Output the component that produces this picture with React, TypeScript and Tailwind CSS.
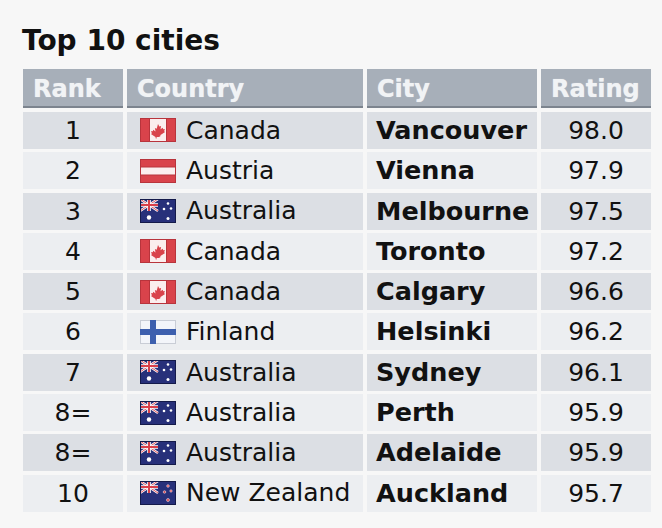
import React from 'react';

type Flag = 'ca' | 'at' | 'au' | 'fi' | 'nz';

const rows: { rank: string; flag: Flag; country: string; city: string; rating: string }[] = [
  { rank: '1', flag: 'ca', country: 'Canada', city: 'Vancouver', rating: '98.0' },
  { rank: '2', flag: 'at', country: 'Austria', city: 'Vienna', rating: '97.9' },
  { rank: '3', flag: 'au', country: 'Australia', city: 'Melbourne', rating: '97.5' },
  { rank: '4', flag: 'ca', country: 'Canada', city: 'Toronto', rating: '97.2' },
  { rank: '5', flag: 'ca', country: 'Canada', city: 'Calgary', rating: '96.6' },
  { rank: '6', flag: 'fi', country: 'Finland', city: 'Helsinki', rating: '96.2' },
  { rank: '7', flag: 'au', country: 'Australia', city: 'Sydney', rating: '96.1' },
  { rank: '8=', flag: 'au', country: 'Australia', city: 'Perth', rating: '95.9' },
  { rank: '8=', flag: 'au', country: 'Australia', city: 'Adelaide', rating: '95.9' },
  { rank: '10', flag: 'nz', country: 'New Zealand', city: 'Auckland', rating: '95.7' },
];

const UnionJack = () => (
  <g>
    <rect x="0" y="0" width="18" height="12" fill="#27307a" />
    <path d="M0 0L18 12M18 0L0 12" stroke="#fff" strokeWidth="2.4" />
    <path d="M0 0L18 12M18 0L0 12" stroke="#d8404a" strokeWidth="0.9" />
    <path d="M9 0V12M0 6H18" stroke="#fff" strokeWidth="3.6" />
    <path d="M9 0V12M0 6H18" stroke="#d8404a" strokeWidth="2" />
  </g>
);

const FlagIcon = ({ kind }: { kind: Flag }) => (
  <svg width="36" height="24" viewBox="0 0 36 24" className="shrink-0">
    {kind === 'ca' && (
      <g>
        <rect x="0.5" y="0.5" width="35" height="23" fill="#fbeeee" stroke="#b8343c" />
        <rect x="0.5" y="0.5" width="9" height="23" fill="#d9434b" stroke="#b8343c" />
        <rect x="26.5" y="0.5" width="9" height="23" fill="#d9434b" stroke="#b8343c" />
        <path d="M18 6l1.3 2.6 1.8-.7-.6 3.4 2.2-1.6.5 1.5 1.7-.3-.8 2.4 1 .6-4.6 3-.3 1.6h-.8V19l-1.4-.1-1.4.1v1.6h-.8l-.3-1.6-4.6-3 1-.6-.8-2.4 1.7.3.5-1.5 2.2 1.6-.6-3.4 1.8.7z" fill="#d9434b" />
      </g>
    )}
    {kind === 'at' && (
      <g>
        <rect x="0.5" y="0.5" width="35" height="23" fill="#fbeeee" stroke="#b8343c" />
        <rect x="0.5" y="0.5" width="35" height="7.5" fill="#d9434b" stroke="#b8343c" />
        <rect x="0.5" y="16" width="35" height="7.5" fill="#d9434b" stroke="#b8343c" />
      </g>
    )}
    {kind === 'fi' && (
      <g>
        <rect x="0.5" y="0.5" width="35" height="23" fill="#f3f5fa" stroke="#c9cdd6" />
        <rect x="10" y="0" width="6" height="24" fill="#3d5fae" />
        <rect x="0" y="9" width="36" height="6" fill="#3d5fae" />
      </g>
    )}
    {(kind === 'au' || kind === 'nz') && (
      <g>
        <rect x="0" y="0" width="36" height="24" fill="#27307a" />
        <UnionJack />
        {kind === 'au' ? (
          <g fill="#fff">
            <circle cx="9" cy="18.5" r="2.2" />
            <circle cx="28" cy="4.5" r="1.3" />
            <circle cx="24" cy="10" r="1.3" />
            <circle cx="31" cy="9.5" r="1.3" />
            <circle cx="28" cy="19.5" r="1.5" />
          </g>
        ) : (
          <g fill="#d8404a" stroke="#fff" strokeWidth="0.5">
            <circle cx="28" cy="5" r="1.3" />
            <circle cx="24.5" cy="11" r="1.3" />
            <circle cx="31" cy="10" r="1.2" />
            <circle cx="28" cy="19" r="1.5" />
          </g>
        )}
        <rect x="0.5" y="0.5" width="35" height="23" fill="none" stroke="#141a4a" />
      </g>
    )}
  </svg>
);

export default function App() {
  return (
    <div className="w-[662px] h-[528px] bg-[#f7f7f7] text-[#111] pt-[24px] pl-[22px]" style={{ fontFamily: '"DejaVu Sans", Verdana, sans-serif' }}>
      <h1 className="text-[28px] font-bold leading-[33px] mb-[12px]">Top 10 cities</h1>
      <div className="grid grid-cols-[100px_236px_170px_110px] gap-x-[4px] gap-y-[3.3px] ml-[1px]">
        {['Rank', 'Country', 'City', 'Rating'].map((h) => (
          <div
            key={h}
            className="h-[39px] bg-[#a7afb9] border-b-2 border-[#7c848e] text-[#f1f3f5] font-bold text-[24px] leading-[40px] px-[10px] mb-[0.7px]"
            style={{ textShadow: '0 0 1px rgba(255,255,255,0.6)' }}
          >
            {h}
          </div>
        ))}
        {rows.map((r, i) => {
          const bg = i % 2 === 0 ? 'bg-[#dcdfe4]' : 'bg-[#eceef1]';
          return (
            <React.Fragment key={i}>
              <div className={`${bg} h-[37px] text-[25px] leading-[37px] text-center`}>{r.rank}</div>
              <div className={`${bg} h-[37px] text-[25px] flex items-center gap-[10px] pl-[13px]`}>
                <FlagIcon kind={r.flag} />
                <span>{r.country}</span>
              </div>
              <div className={`${bg} h-[37px] text-[25.5px] leading-[37px] font-bold pl-[9px]`}>{r.city}</div>
              <div className={`${bg} h-[37px] text-[25px] leading-[37px] text-center`}>{r.rating}</div>
            </React.Fragment>
          );
        })}
      </div>
    </div>
  );
}
